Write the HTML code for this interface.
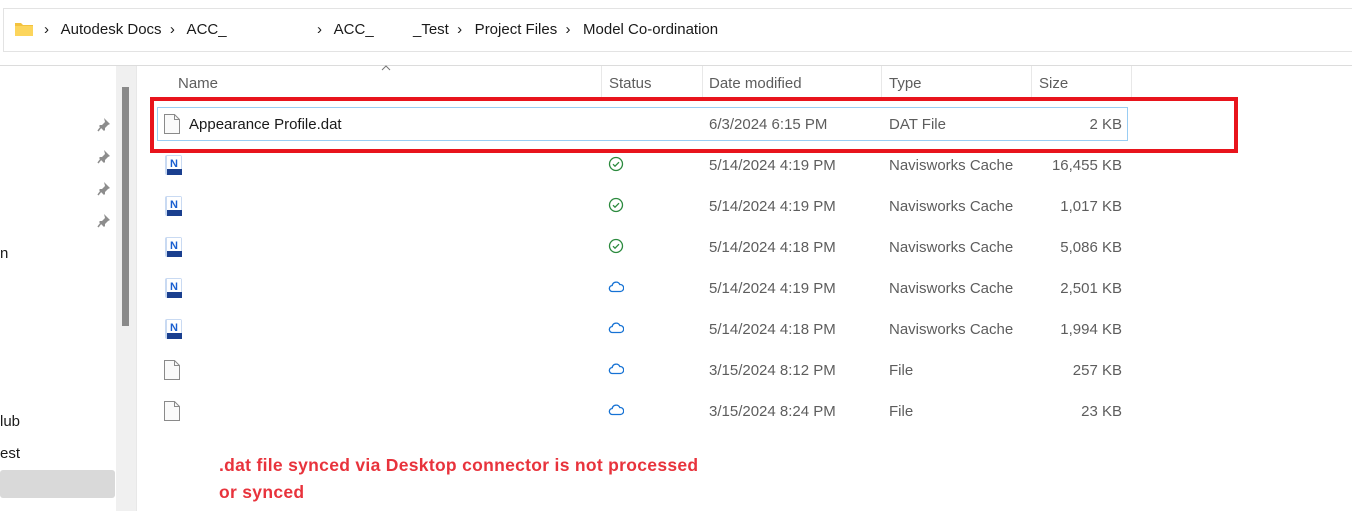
<!DOCTYPE html>
<html><head><meta charset="utf-8"><style>
*{margin:0;padding:0;box-sizing:border-box}
body{width:1352px;height:511px;background:#fff;position:relative;overflow:hidden;font-family:"Liberation Sans",sans-serif;font-size:15px;color:#1a1a1a}
.a{position:absolute;white-space:nowrap}
.g{color:#5d5d5d}
.bc{position:absolute;left:3px;top:8px;width:1360px;height:44px;border:1px solid #e3e3e3;background:#fff}
.sep{position:absolute;top:66px;width:1px;height:32px;background:#e8e8e8}
.r{text-align:right}
</style></head><body>
<div class="bc"></div>
<svg class="a" style="left:14px;top:21px" width="20" height="16" viewBox="0 0 20 16"><path d="M1 2h6l2 2h10v11H1z" fill="#f3c23e"/><path d="M1 5h18v10H1z" fill="#fcd55c"/></svg>
<div class="a" style="left:44px;top:21px;font-size:15px">›&nbsp;&nbsp; Autodesk Docs &nbsp;›&nbsp;&nbsp; ACC_</div>
<div class="a" style="left:317px;top:21px;font-size:15px">›&nbsp;&nbsp; ACC_</div>
<div class="a" style="left:413px;top:21px;font-size:15px">_Test &nbsp;›&nbsp;&nbsp; Project Files &nbsp;›&nbsp;&nbsp; Model Co-ordination</div>
<div class="a" style="left:0;top:65px;width:1352px;height:1px;background:#dcdcdc"></div>
<div class="a" style="left:116px;top:66px;width:20px;height:445px;background:#f0f0f0"></div>
<div class="a" style="left:122px;top:87px;width:7px;height:239px;background:#8a8a8a"></div>
<div class="a" style="left:136px;top:66px;width:1px;height:445px;background:#e8e8e8"></div>
<div class="a" style="left:0;top:470px;width:115px;height:28px;background:#d9d9d9;border-radius:3px"></div>
<div class="a" style="left:0;top:245px">n</div>
<div class="a" style="left:0;top:413px">lub</div>
<div class="a" style="left:0;top:445px">est</div>
<svg width="0" height="0" style="position:absolute"><defs>
<g id="pin"><path d="M7 1l6 6-2 1-3 3 0 2-1 1-5-5 1-1 2 0 3-3z" fill="#8d8d8d"/><path d="M4 10l-3 4" stroke="#8d8d8d" stroke-width="1.5"/></g>
<g id="doc"><path d="M0.5 0.5h10l5 5v14h-15z" fill="#fafafa" stroke="#8a8a8a"/><path d="M10.5 0.5v5h5" fill="none" stroke="#8a8a8a"/></g>
<g id="nwc"><rect x="1" y="0" width="17" height="20" rx="2" fill="#c9daf2"/><rect x="3" y="1" width="14" height="13" fill="#fff"/><text x="10" y="12" font-size="11" font-weight="bold" fill="#1a5fd0" text-anchor="middle" font-family="Liberation Sans">N</text><rect x="3" y="14" width="15" height="6" fill="#1a3f8f"/></g>
<g id="ok"><circle cx="8" cy="8" r="6.5" fill="none" stroke="#2b8a3e" stroke-width="1.3"/><path d="M5 8.2l2 2 4-4" fill="none" stroke="#2b8a3e" stroke-width="1.3"/></g>
<g id="cl"><path d="M4.5 12.5a3 3 0 0 1-.3-6A4 4 0 0 1 11.8 5.5a3.5 3.5 0 0 1 .7 7z" fill="none" stroke="#1672d4" stroke-width="1.3"/></g>
</defs></svg>
<svg class="a" style="left:97px;top:117px" width="15" height="15"><use href="#pin"/></svg>
<svg class="a" style="left:97px;top:149px" width="15" height="15"><use href="#pin"/></svg>
<svg class="a" style="left:97px;top:181px" width="15" height="15"><use href="#pin"/></svg>
<svg class="a" style="left:97px;top:213px" width="15" height="15"><use href="#pin"/></svg>
<svg class="a" style="left:381px;top:65px" width="10" height="6"><path d="M1 5l4-4 4 4" fill="none" stroke="#777"/></svg>
<div class="a g" style="left:178px;top:75px">Name</div>
<div class="a g" style="left:609px;top:75px">Status</div>
<div class="a g" style="left:709px;top:75px">Date modified</div>
<div class="a g" style="left:889px;top:75px">Type</div>
<div class="a g" style="left:1039px;top:75px">Size</div>
<div class="sep" style="left:601px"></div><div class="sep" style="left:702px"></div><div class="sep" style="left:881px"></div><div class="sep" style="left:1031px"></div><div class="sep" style="left:1131px"></div>
<div class="a" style="left:157px;top:107px;width:971px;height:34px;border:1px solid #99cdf3"></div>
<div class="a" style="left:150px;top:97px;width:1088px;height:56px;border:4px solid #e8141c"></div>
<div id="rows"></div>
<div class="a" style="left:219px;top:452px;color:#e8333c;font-weight:bold;font-size:17.5px;line-height:27px;letter-spacing:0.3px">.dat file synced via Desktop connector is not processed<br>or synced</div>
<script>
var d=[["doc","Appearance Profile.dat","","6/3/2024 6:15 PM","DAT File","2 KB"],
["nwc","","ok","5/14/2024 4:19 PM","Navisworks Cache","16,455 KB"],
["nwc","","ok","5/14/2024 4:19 PM","Navisworks Cache","1,017 KB"],
["nwc","","ok","5/14/2024 4:18 PM","Navisworks Cache","5,086 KB"],
["nwc","","cl","5/14/2024 4:19 PM","Navisworks Cache","2,501 KB"],
["nwc","","cl","5/14/2024 4:18 PM","Navisworks Cache","1,994 KB"],
["doc","","cl","3/15/2024 8:12 PM","File","257 KB"],
["doc","","cl","3/15/2024 8:24 PM","File","23 KB"]];
var h="";d.forEach(function(r,i){var y=124+41*i;
h+='<svg class="a" style="left:164px;top:'+(y-10)+'px" width="20" height="21"><use href="#'+r[0]+'"/></svg>';
if(r[1])h+='<div class="a" style="left:189px;top:'+(y-8)+'px">'+r[1]+'</div>';
if(r[2])h+='<svg class="a" style="left:608px;top:'+(y-9)+'px" width="16" height="16"><use href="#'+r[2]+'"/></svg>';
h+='<div class="a g" style="left:709px;top:'+(y-8)+'px">'+r[3]+'</div><div class="a g" style="left:889px;top:'+(y-8)+'px">'+r[4]+'</div><div class="a g r" style="right:230px;top:'+(y-8)+'px">'+r[5]+'</div>';});
document.getElementById("rows").innerHTML=h;
</script>
</body></html>
